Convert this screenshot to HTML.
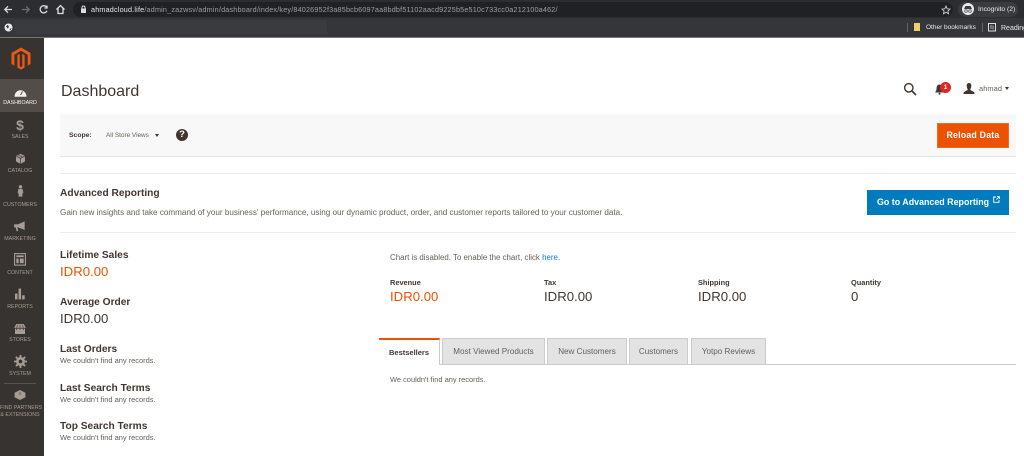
<!DOCTYPE html>
<html><head><meta charset="utf-8"><style>
*{box-sizing:border-box}
html,body{margin:0;padding:0;width:1024px;height:456px;overflow:hidden;background:#fff;font-family:"Liberation Sans",sans-serif}
#w{position:absolute;left:0;top:0;width:1024px;height:456px;filter:blur(.3px);overflow:hidden}
.t{position:absolute;white-space:nowrap;line-height:1}
.b{position:absolute}
.nav{position:absolute;left:0;width:40px;text-align:center;color:#a79d95;font-size:5.300px;white-space:nowrap;line-height:7px}
.h{font-weight:bold;color:#41362f;font-size:10.200px}
.s{font-size:7.450px;color:#676056}
.v{font-size:13.200px;color:#41362f}
.l{font-size:7.400px;font-weight:bold;color:#41362f}
.tab{position:absolute;top:338px;height:26px;background:#e3e3e3;border:1px solid #ccc;border-bottom:0;color:#676056;font-size:8.100px;text-align:center;line-height:26px}
svg{position:absolute;display:block}
</style></head><body><div id="w">
<!-- browser chrome -->
<div class="b" style="left:0;top:0;width:1024px;height:19px;background:#2c2d30"></div>
<div class="b" style="left:0;top:18px;width:1024px;height:19px;background:#35363a"></div>
<div class="b" style="left:0;top:37px;width:1024px;height:1px;background:#777"></div>
<div class="b" style="left:73px;top:2px;width:880px;height:15px;border-radius:8px;background:#202124"></div>
<div class="b" style="left:15px;top:20px;width:312px;height:14px;background:#3a3b3e"></div>
<svg style="left:0;top:0" width="72" height="19" viewBox="0 0 72 19" fill="none" stroke-width="1.3">
<path d="M12 9.500H5M8 6.300L4.800 9.500 8 12.700" stroke="#dcdde0"/>
<path d="M22 9.500H29M26 6.300L29.200 9.500 26 12.700" stroke="#6d6e72"/>
<path d="M46.500 7A3.600 3.600 0 1 0 47 10.800M47 5.500V8H44.500" stroke="#dcdde0"/>
<path d="M56.500 9.500L60.500 5.500 64.500 9.500M58 8.500V13.500H63V8.500" stroke="#dcdde0"/>
</svg>
<svg style="left:80px;top:5px" width="7" height="9" viewBox="0 0 7 9"><rect x="1" y="3.500" width="5" height="4.500" fill="#dcdde0"/><path d="M2 4V2.500a1.500 1.500 0 0 1 3 0V4" fill="none" stroke="#dcdde0"/></svg>
<div class="t" style="left:91px;top:6px;font-size:7.200px;color:#9aa0a6;letter-spacing:.2px"><span style="color:#e8eaed">ahmadcloud.life</span>/admin_zazwsv/admin/dashboard/index/key/84026952f3a85bcb6097aa8bdbf51102aacd9225b5e510c733cc0a212100a462/</div>
<svg style="left:4px;top:23px" width="9" height="9" viewBox="0 0 9 9"><circle cx="4.500" cy="4.500" r="4" fill="#e8eaed"/><path d="M2 3L4 2 5 4 3.500 5.500ZM5.500 6L7.500 5 6.500 7.500Z" fill="#35363a"/></svg>
<svg style="left:941px;top:5px" width="10" height="10" viewBox="0 0 10 10"><path d="M5 1L6.200 3.800 9 4.100 6.900 6 7.500 8.800 5 7.300 2.500 8.800 3.100 6 1 4.100 3.800 3.800Z" fill="none" stroke="#c9cbce" stroke-width=".9"/></svg>
<div class="b" style="left:958px;top:2px;width:60px;height:15px;border-radius:8px;background:#3a3b3f"></div>
<svg style="left:962px;top:3px" width="12" height="12" viewBox="0 0 12 12"><circle cx="6" cy="6" r="6" fill="#e8eaed"/><path d="M2 6H10L8.500 3H3.500Z" fill="#3a3b3f"/><circle cx="4" cy="8" r="1.300" fill="none" stroke="#3a3b3f" stroke-width=".7"/><circle cx="8" cy="8" r="1.300" fill="none" stroke="#3a3b3f" stroke-width=".7"/></svg>
<div class="t" style="left:978px;top:7px;font-size:6.700px;color:#e8eaed">Incognito (2)</div>
<div class="b" style="left:907px;top:23px;width:1px;height:9px;background:#5f6368"></div>
<div class="b" style="left:914px;top:23px;width:6px;height:8px;background:#f2cf6b"></div>
<div class="t" style="left:926px;top:25px;font-size:6.500px;color:#e8eaed">Other bookmarks</div>
<div class="b" style="left:982px;top:23px;width:1px;height:9px;background:#5f6368"></div>
<svg style="left:988px;top:23px" width="8" height="9" viewBox="0 0 8 9"><rect x=".5" y=".5" width="7" height="7.500" fill="none" stroke="#dcdde0"/><path d="M2 3H4M2 5H4M5 2.500V6.500" stroke="#dcdde0" stroke-width=".7"/></svg>
<div class="t" style="left:1001px;top:25px;font-size:7px;color:#e8eaed">Reading</div>

<!-- sidebar -->
<div class="b" style="left:0;top:38px;width:44px;height:418px;background:#373330"></div>
<div class="b" style="left:0;top:79px;width:44px;height:33px;background:#524d49"></div>
<svg style="left:11px;top:47px" width="20" height="23" viewBox="0 0 20 23"><path d="M10 .5L19.500 6V17L16.700 18.600V7.700L10 3.800 3.300 7.700V18.600L.5 17V6Z" fill="#ee5a11"/><path d="M8.700 6.800V19.300L10 20.100 11.300 19.300V6.800L13.600 8.100V20.500L10 22.600 6.400 20.500V8.100Z" fill="#ee5a11"/></svg>
<svg style="left:14px;top:88px" width="13" height="9" viewBox="0 0 13 9"><path d="M.5 8.700A6 6.500 0 1 1 12.500 8.700Z" fill="#f1eeeb"/><path d="M6.500 7L8.500 3.500" stroke="#524d49" stroke-width="1"/></svg>
<div class="nav" style="top:99.500px;color:#f7f3eb">DASHBOARD</div>
<div class="t" style="left:12px;top:118px;width:16px;text-align:center;font-size:14px;font-weight:bold;color:#a79d95">$</div>
<div class="nav" style="top:134px">SALES</div>
<svg style="left:15px;top:153px" width="11" height="12" viewBox="0 0 16 16"><path d="M8 .5L14.500 3.500V11.500L8 15 1.500 11.500V3.500Z" fill="#a79d95"/><path d="M1.500 3.500L8 7 14.500 3.500M8 7V15M5 2L11 5.300" stroke="#373330" fill="none"/></svg>
<div class="nav" style="top:168px">CATALOG</div>
<svg style="left:16px;top:184px" width="9" height="14" viewBox="0 0 12 16"><circle cx="6" cy="2.500" r="2.300" fill="#a79d95"/><path d="M3 5.500H9L9.800 11H8.500V15.500H3.500V11H2.200Z" fill="#a79d95"/></svg>
<div class="nav" style="top:202px">CUSTOMERS</div>
<svg style="left:14px;top:221px" width="12" height="11" viewBox="0 0 14 13"><path d="M0 4H4.500L12.500 .5V10.500L4.500 7.500H3.800L5 12H3L1.800 7.500H0Z" fill="#a79d95"/></svg>
<div class="nav" style="top:236px">MARKETING</div>
<svg style="left:14px;top:253px" width="12" height="13" viewBox="0 0 13 14"><rect x=".6" y=".6" width="11.800" height="12.500" fill="none" stroke="#a79d95" stroke-width="1.200"/><rect x="2.500" y="2.500" width="8" height="2" fill="#a79d95"/><rect x="2.500" y="6" width="2.500" height="5" fill="#a79d95"/><rect x="6.300" y="6" width="4.200" height="5" fill="#a79d95"/></svg>
<div class="nav" style="top:270px">CONTENT</div>
<svg style="left:15px;top:288px" width="10" height="12" viewBox="0 0 12 13"><rect x="0" y="6" width="3" height="7" fill="#a79d95"/><rect x="4.300" y="0" width="3" height="13" fill="#a79d95"/><rect x="8.600" y="8" width="3" height="5" fill="#a79d95"/></svg>
<div class="nav" style="top:304px">REPORTS</div>
<svg style="left:13px;top:324px" width="14" height="10" viewBox="0 0 15 13"><path d="M2.500 0H12.500L15 5H0Z" fill="#a79d95"/><path d="M1 6H14V13H1Z" fill="#a79d95"/><path d="M4 1L3 8M7.500 1V8M11 1L12 8" stroke="#373330" stroke-width=".8"/></svg>
<div class="nav" style="top:337px">STORES</div>
<svg style="left:14px;top:355px" width="13" height="13" viewBox="0 0 14 14"><circle cx="7" cy="7" r="3.400" fill="none" stroke="#a79d95" stroke-width="2.800"/><path d="M7 0V14M0 7H14M2 2L12 12M12 2L2 12" stroke="#a79d95" stroke-width="2" stroke-dasharray="2.500 9 2.500"/></svg>
<div class="nav" style="top:371px">SYSTEM</div>
<div class="b" style="left:4px;top:383px;width:32px;height:1px;background:#5a5450"></div>
<svg style="left:14px;top:390px" width="12" height="10" viewBox="0 0 14 13"><path d="M7 0L14 3.500V9.500L7 13 0 9.500V3.500Z" fill="#a79d95"/><circle cx="7" cy="4.500" r="2" fill="#8a8078"/></svg>
<div class="nav" style="top:405px;line-height:7px">FIND PARTNERS<br>&amp; EXTENSIONS</div>

<!-- header -->
<div class="t" style="left:61px;top:84px;font-size:16px;color:#41362f">Dashboard</div>
<svg style="left:903px;top:82px" width="14" height="14" viewBox="0 0 14 14"><circle cx="5.800" cy="5.800" r="4.200" fill="none" stroke="#41362f" stroke-width="1.400"/><path d="M9 9L13 13" stroke="#41362f" stroke-width="1.600"/></svg>
<svg style="left:934px;top:84px" width="11" height="11" viewBox="0 0 10 11"><path d="M5 .5C7.500 .5 8 3 8 5S9 7.500 9.500 8.500H.5C1 7.500 2 7 2 5S2.500 .5 5 .5Z" fill="#41362f"/><circle cx="5" cy="9.800" r="1" fill="#41362f"/></svg>
<div class="b" style="left:940px;top:82px;width:11px;height:11px;border-radius:50%;background:#e22626;color:#fff;font-size:6.500px;font-weight:bold;text-align:center;line-height:11px">1</div>
<svg style="left:963px;top:83px" width="12" height="11" viewBox="0 0 12 11"><path d="M6 0C7.800 0 8.500 1.500 8.300 3.300 8.100 5 7.300 6 7.300 6.700 7.300 7.500 11.500 8 11.500 10.500V11H.5V10.500C.5 8 4.700 7.500 4.700 6.700 4.700 6 3.900 5 3.700 3.300 3.500 1.500 4.200 0 6 0Z" fill="#41362f"/></svg>
<div class="t" style="left:979px;top:84.500px;font-size:7.400px;color:#676056;letter-spacing:.1px">ahmad</div>
<div class="b" style="left:1005px;top:87px;border:2.300px solid transparent;border-top:3px solid #41362f;border-bottom:0"></div>

<!-- scope bar -->
<div class="b" style="left:60px;top:114px;width:956px;height:43px;background:#f8f8f8;border-bottom:1px solid #e3e3e3"></div>
<div class="t" style="left:69px;top:133px;font-size:6.800px;font-weight:bold;color:#41362f">Scope:</div>
<div class="t" style="left:106px;top:133px;font-size:6.400px;color:#676056">All Store Views</div>
<div class="b" style="left:155px;top:134px;border:2.500px solid transparent;border-top:3px solid #41362f;border-bottom:0"></div>
<div class="b" style="left:176px;top:129px;width:12px;height:12px;border-radius:50%;background:#41362f;color:#fff;font-size:9.500px;font-weight:bold;text-align:center;line-height:12px">?</div>
<div class="b" style="left:937px;top:123px;width:72px;height:25px;background:#eb5202;border:1px solid #ef6a22;color:#fff;font-size:8.800px;font-weight:bold;text-align:center;line-height:23px;letter-spacing:.2px">Reload Data</div>

<!-- advanced reporting -->
<div class="b" style="left:60px;top:173px;width:956px;height:1px;background:#ebebeb"></div>
<div class="t h" style="left:60px;top:189px">Advanced Reporting</div>
<div class="t" style="left:60px;top:209px;font-size:8.130px;color:#676056">Gain new insights and take command of your business' performance, using our dynamic product, order, and customer reports tailored to your customer data.</div>
<div class="b" style="left:60px;top:232px;width:956px;height:1px;background:#ebebeb"></div>
<div class="b" style="left:867px;top:190px;width:142px;height:25px;background:#007bbd;color:#fff;font-size:8.900px;font-weight:bold;line-height:25px;padding-left:10px">Go to Advanced Reporting</div>
<svg style="left:993px;top:196px" width="7" height="7" viewBox="0 0 7 7"><path d="M3 1H.7V6.300H6V4M3.500 3.500L6.300 .7M4 .6H6.400V3" fill="none" stroke="#fff" stroke-width=".9"/></svg>

<!-- left column -->
<div class="t h" style="left:60px;top:251px">Lifetime Sales</div>
<div class="t v" style="left:60px;top:265px;color:#eb5202">IDR0.00</div>
<div class="t h" style="left:60px;top:298px">Average Order</div>
<div class="t v" style="left:60px;top:312px">IDR0.00</div>
<div class="t h" style="left:60px;top:345px">Last Orders</div>
<div class="t s" style="left:60px;top:357px">We couldn't find any records.</div>
<div class="t h" style="left:60px;top:384px">Last Search Terms</div>
<div class="t s" style="left:60px;top:396px">We couldn't find any records.</div>
<div class="t h" style="left:60px;top:422px">Top Search Terms</div>
<div class="t s" style="left:60px;top:434px">We couldn't find any records.</div>

<!-- right column -->
<div class="t" style="left:390px;top:254px;font-size:7.900px;color:#676056">Chart is disabled. To enable the chart, click <span style="color:#007bdb">here</span>.</div>
<div class="t l" style="left:390px;top:279px">Revenue</div>
<div class="t v" style="left:390px;top:290px;color:#eb5202">IDR0.00</div>
<div class="t l" style="left:544px;top:279px">Tax</div>
<div class="t v" style="left:544px;top:290px">IDR0.00</div>
<div class="t l" style="left:698px;top:279px">Shipping</div>
<div class="t v" style="left:698px;top:290px">IDR0.00</div>
<div class="t l" style="left:851px;top:279px">Quantity</div>
<div class="t v" style="left:851px;top:290px">0</div>

<!-- tabs -->
<div class="b" style="left:380px;top:364px;width:636px;height:1px;background:#ccc"></div>
<div class="tab" style="left:442px;width:103px">Most Viewed Products</div>
<div class="tab" style="left:547px;width:80px">New Customers</div>
<div class="tab" style="left:629px;width:59px">Customers</div>
<div class="tab" style="left:691px;width:75px">Yotpo Reviews</div>
<div class="b" style="left:379px;top:338px;width:61px;height:27px;background:#fff;border-top:2px solid #eb5202;border-right:1px solid #ccc;color:#41362f;font-size:7.500px;font-weight:bold;text-align:center;line-height:25px">Bestsellers</div>
<div class="t s" style="left:390px;top:376px">We couldn't find any records.</div>
</div></body></html>
